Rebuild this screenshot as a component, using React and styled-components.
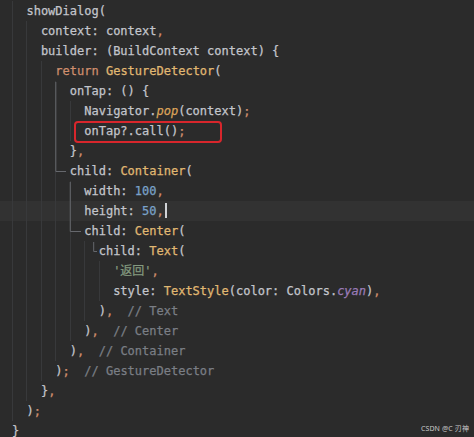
import React from "react";
import styled, { createGlobalStyle } from "styled-components";

const Global = createGlobalStyle`
  html, body { margin: 0; padding: 0; background: #2b2b2b; }
  #root { width: 474px; height: 437px; overflow: hidden; }
`;

const Editor = styled.div`
  position: relative;
  width: 474px;
  height: 437px;
  overflow: hidden;
  background: #2b2b2b;
  padding-top: 1px;
  box-sizing: border-box;
  font-family: "DejaVu Sans Mono", "Liberation Mono", "Noto Sans CJK SC", monospace;
  font-size: 12px;
  color: #c3c5cb;
  -webkit-text-stroke: 0.25px currentColor;
  display: flex;
  flex-direction: column;
`;

const Line = styled.div`
  display: flex;
  height: 20px;
  flex: none;
  padding-left: 12px;
  background: ${(p) => (p.$current ? "#323232" : "transparent")};
`;

const Indent = styled.span`
  flex: none;
  width: ${(p) => p.$n}ch;
  background-image: repeating-linear-gradient(
    to right,
    #38393b 0,
    #38393b 1px,
    transparent 1px,
    transparent 2ch
  );
`;

const Content = styled.span`
  white-space: pre;
  line-height: 20px;
`;

const Kw = styled.span`color: #cf8e6d;`;
const Cls = styled.span`color: #e0b872;`;
const Punct = styled.span`color: #cf8e6d;`;
const Num = styled.span`color: #7aa2c9;`;
const Str = styled.span`color: #83997f;`;
const Cmt = styled.span`color: #7a7e85;`;
const Fn = styled.span`color: #dca45a; font-style: italic;`;
const Field = styled.span`color: #9a7bb8; font-style: italic;`;

const Marked = styled.span`
  position: relative;
  &::after {
    content: "";
    position: absolute;
    top: -3px;
    bottom: -5px;
    left: -10px;
    right: -37px;
    border: 2px solid #d8262c;
    border-radius: 4px;
  }
`;

const Caret = styled.span`
  display: inline-block;
  width: 2px;
  height: 15px;
  margin-left: 1px;
  vertical-align: -3px;
  background: #d0d2d6;
`;

const Guides = styled.svg`
  position: absolute;
  left: 0;
  top: 0;
  pointer-events: none;
`;

const Watermark = styled.div`
  position: absolute;
  right: 5px;
  bottom: 4px;
  font-family: "Noto Sans", "Noto Sans CJK SC", sans-serif;
  font-size: 7px;
  color: #c8c8c8;
  -webkit-text-stroke: 0;
  letter-spacing: 0.1px;
`;

const lines = [
  { i: 2, c: <>showDialog(</> },
  { i: 4, c: <>context: context<Punct>,</Punct></> },
  { i: 4, c: <>builder: (BuildContext context) {"{"}</> },
  { i: 6, c: <><Kw>return</Kw> <Cls>GestureDetector</Cls>(</> },
  { i: 8, c: <>onTap: () {"{"}</> },
  { i: 10, c: <>Navigator.<Fn>pop</Fn>(context)<Punct>;</Punct></> },
  { i: 10, c: <Marked>onTap?.call()<Punct>;</Punct></Marked> },
  { i: 8, c: <>{"}"}<Punct>,</Punct></> },
  { i: 8, c: <>child: <Cls>Container</Cls>(</> },
  { i: 10, c: <>width: <Num>100</Num><Punct>,</Punct></> },
  { i: 10, cur: true, c: <>height: <Num>50</Num><Punct>,</Punct><Caret /></> },
  { i: 10, c: <>child: <Cls>Center</Cls>(</> },
  { i: 12, c: <>child: <Cls>Text</Cls>(</> },
  { i: 14, c: <><Str>'返回'</Str><Punct>,</Punct></> },
  { i: 14, c: <>style: <Cls>TextStyle</Cls>(color: Colors.<Field>cyan</Field>)<Punct>,</Punct></> },
  { i: 12, c: <>)<Punct>,</Punct>  <Cmt>// Text</Cmt></> },
  { i: 10, c: <>)<Punct>,</Punct>  <Cmt>// Center</Cmt></> },
  { i: 8, c: <>)<Punct>,</Punct>  <Cmt>// Container</Cmt></> },
  { i: 6, c: <>)<Punct>;</Punct>  <Cmt>// GestureDetector</Cmt></> },
  { i: 4, c: <>{"}"}<Punct>,</Punct></> },
  { i: 2, c: <>)<Punct>;</Punct></> },
  { i: 0, c: <>{"}"}</> },
];

function WidgetGuides() {
  const col = (n) => 12 + n * 7.22 + 0.5;
  const stroke = "#66686d";
  return (
    <Guides width="474" height="437" viewBox="0 0 474 437">
      <path d={`M${col(6)} 82 V171.5 H66`} stroke={stroke} strokeWidth="1" fill="none" />
      <path d={`M${col(8)} 182 V231.5 H81`} stroke={stroke} strokeWidth="1" fill="none" />
      <path d={`M${col(10) + 9} 242 V251.5 H97`} stroke={stroke} strokeWidth="1" fill="none" />
    </Guides>
  );
}

export default function App() {
  return (
    <>
      <Global />
      <Editor>
        {lines.map((l, k) => (
          <Line key={k} $current={l.cur}>
            <Indent $n={l.i} />
            <Content>{l.c}</Content>
          </Line>
        ))}
        <WidgetGuides />
        <Watermark>CSDN @C 刃神</Watermark>
      </Editor>
    </>
  );
}
